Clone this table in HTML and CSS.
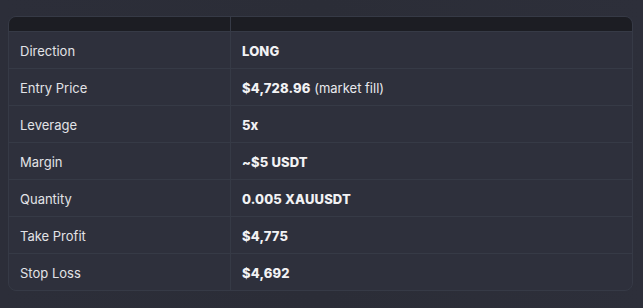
FILE: index.html
```html
<!DOCTYPE html>
<html>
<head>
<meta charset="utf-8">
<link rel="stylesheet" href="styles.css">
</head>
<body>
<div class="wrap">
  <table class="trade">
    <thead>
      <tr><th></th><th></th></tr>
    </thead>
    <tbody>
      <tr><td class="lbl">Direction</td><td class="val"><b>LONG</b></td></tr>
      <tr><td class="lbl">Entry Price</td><td class="val"><b>$4,728.96</b> (market fill)</td></tr>
      <tr><td class="lbl">Leverage</td><td class="val"><b>5x</b></td></tr>
      <tr><td class="lbl">Margin</td><td class="val"><b>~$5 USDT</b></td></tr>
      <tr><td class="lbl">Quantity</td><td class="val"><b>0.005 XAUUSDT</b></td></tr>
      <tr><td class="lbl">Take Profit</td><td class="val"><b>$4,775</b></td></tr>
      <tr><td class="lbl">Stop Loss</td><td class="val"><b>$4,692</b></td></tr>
    </tbody>
  </table>
</div>
</body>
</html>
```
FILE: styles.css
```css
html, body {
  margin: 0;
  padding: 0;
  height: 100%;
}
body {
  background: linear-gradient(90deg, #2c2e39 0%, #2b2d37 50%, #2d2f3a 100%);
  font-family: Inter, "Open Sans", sans-serif;
  color: #e4e5e9;
  overflow: hidden;
}
.wrap {
  padding: 16px 10px 0 8px;
}
.trade {
  width: 625px;
  border-collapse: separate;
  border-spacing: 0;
  border: 1px solid #363a46;
  border-radius: 8px;
  overflow: hidden;
  background: #2e303c;
  font-size: 13px;
}
.trade th {
  height: 14px;
  padding: 0;
  background: #1c1d23;
  border-bottom: 1px solid #363a46;
}
.trade th:first-child {
  border-right: 1px solid #363a46;
}
.trade td {
  box-sizing: border-box;
  height: 37px;
  padding: 2px 12px 0 11px;
  border-bottom: 1px solid #363a46;
  vertical-align: middle;
}
.trade tr:last-child td {
  border-bottom: none;
  height: 36px;
}
.trade td.lbl {
  width: 222px;
  border-right: 1px solid #363a46;
  color: #e2e3e7;
}
.trade td.val {
  color: #e8e9ed;
}
.trade td.val b {
  font-weight: 800;
  letter-spacing: 0.15px;
  color: #f2f2f4;
}
```
